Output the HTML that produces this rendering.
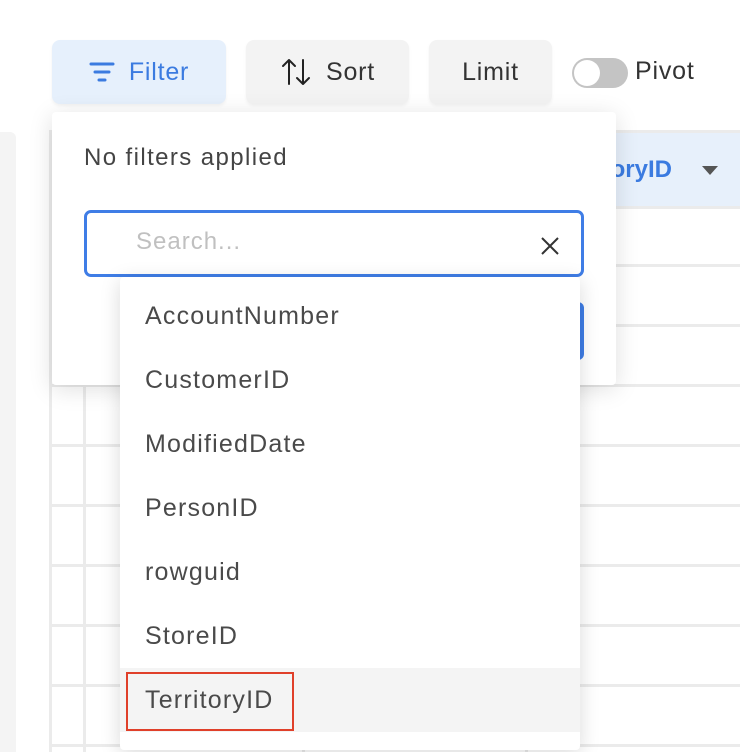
<!DOCTYPE html>
<html><head><style>
*{margin:0;padding:0;box-sizing:border-box}
body{width:740px;height:752px;overflow:hidden;background:#fff;font-family:"Liberation Sans",sans-serif;position:relative}
.abs{position:absolute}
.btn{position:absolute;top:40px;height:64px;border-radius:8px;background:#f3f3f3;font-size:25px;letter-spacing:0.8px;color:#333;display:flex;align-items:center;justify-content:center;box-shadow:0 2px 3px rgba(0,0,0,.05)}
.hl{position:absolute;left:49px;right:0;height:3px;background:#ebebeb}
.vl{position:absolute;width:3px;background:#ebebeb}
.item{position:absolute;left:0;right:0;height:64px;line-height:64px;padding-left:25px;font-size:25px;letter-spacing:1.2px;color:#4a4a4a}
</style></head><body>
<div class="abs" style="left:0;top:132px;width:16px;height:620px;background:#f4f4f4;border-top-right-radius:6px"></div>
<!-- table -->
<div class="abs" style="left:49px;top:130px;right:0;height:3px;background:#ebebeb"></div>
<div class="abs" style="left:51px;top:133px;right:0;height:73px;background:#e7f0fb"></div>
<div class="abs" style="left:540px;top:156px;font-size:24px;font-weight:bold;color:#3b7be0;width:132px;text-align:right;overflow:hidden;direction:rtl">TerritoryID</div>
<div class="abs" style="left:702px;top:166px;width:0;height:0;border-left:8px solid transparent;border-right:8px solid transparent;border-top:9px solid #555"></div>
<div class="hl" style="top:206px"></div>
<div class="hl" style="top:264px"></div><div class="hl" style="top:324px"></div><div class="hl" style="top:384px"></div><div class="hl" style="top:444px"></div><div class="hl" style="top:504px"></div><div class="hl" style="top:564px"></div><div class="hl" style="top:624px"></div><div class="hl" style="top:684px"></div><div class="hl" style="top:744px"></div>
<div class="vl" style="left:49px;top:130px;bottom:0"></div>
<div class="vl" style="left:83px;top:206px;bottom:0"></div>
<div class="vl" style="left:302px;top:206px;bottom:0"></div>
<div class="vl" style="left:525px;top:206px;bottom:0"></div>
<!-- toolbar -->
<div class="btn" style="left:52px;width:174px;background:#e6f0fc;color:#3b7be0">
<svg width="26" height="22" viewBox="0 0 26 22" style="margin-right:14px"><g stroke="#3b7be0" stroke-width="3" stroke-linecap="round"><line x1="2" y1="3" x2="24" y2="3"/><line x1="6" y1="11" x2="20" y2="11"/><line x1="10" y1="19" x2="16" y2="19"/></g></svg>Filter</div>
<div class="btn" style="left:246px;width:163px">
<svg width="32" height="30" viewBox="0 0 32 30" style="margin-right:14px"><g stroke="#222" stroke-width="2" fill="none" stroke-linecap="round" stroke-linejoin="round"><path d="M9 27V3M3 9l6-6 6 6"/><path d="M23 3v24M17 21l6 6 6-6"/></g></svg>Sort</div>
<div class="btn" style="left:429px;width:123px">Limit</div>
<div class="abs" style="left:572px;top:58px;width:56px;height:30px;border-radius:15px;background:#c4c4c4"></div>
<div class="abs" style="left:574px;top:60px;width:26px;height:26px;border-radius:50%;background:#fff"></div>
<div class="abs" style="left:635px;top:57px;font-size:25px;letter-spacing:0.8px;color:#333">Pivot</div>
<!-- popover -->
<div class="abs" style="left:52px;top:112px;width:564px;height:273px;background:#fff;border-radius:4px;box-shadow:0 4px 24px rgba(0,0,0,.13)">
<div class="abs" style="left:32px;top:32px;font-size:24px;letter-spacing:1.4px;color:#444">No filters applied</div>
<div class="abs" style="left:32px;top:98px;width:500px;height:67px;border:3px solid #3f7de6;border-radius:7px"></div>
<div class="abs" style="left:84px;top:116px;font-size:24px;letter-spacing:1px;color:#c0c0c0">Search...</div>
<svg class="abs" style="left:488px;top:124px" width="20" height="20" viewBox="0 0 20 20"><path d="M2 2L18 18M18 2L2 18" stroke="#333" stroke-width="2"/></svg>
<div class="abs" style="left:500px;top:190px;width:32px;height:58px;background:#3f7de6;border-radius:6px"></div>
</div>
<!-- dropdown -->
<div class="abs" style="left:120px;top:277px;width:460px;height:473px;background:#fff;border-radius:4px;box-shadow:0 4px 20px rgba(0,0,0,.15);overflow:hidden">
<div class="item" style="top:7px">AccountNumber</div>
<div class="item" style="top:71px">CustomerID</div>
<div class="item" style="top:135px">ModifiedDate</div>
<div class="item" style="top:199px">PersonID</div>
<div class="item" style="top:263px">rowguid</div>
<div class="item" style="top:327px">StoreID</div>
<div class="item" style="top:391px;background:#f4f4f4">TerritoryID</div>
<div class="abs" style="left:6px;top:395px;width:168px;height:59px;border:2px solid #e0402a"></div>
</div>
</body></html>
